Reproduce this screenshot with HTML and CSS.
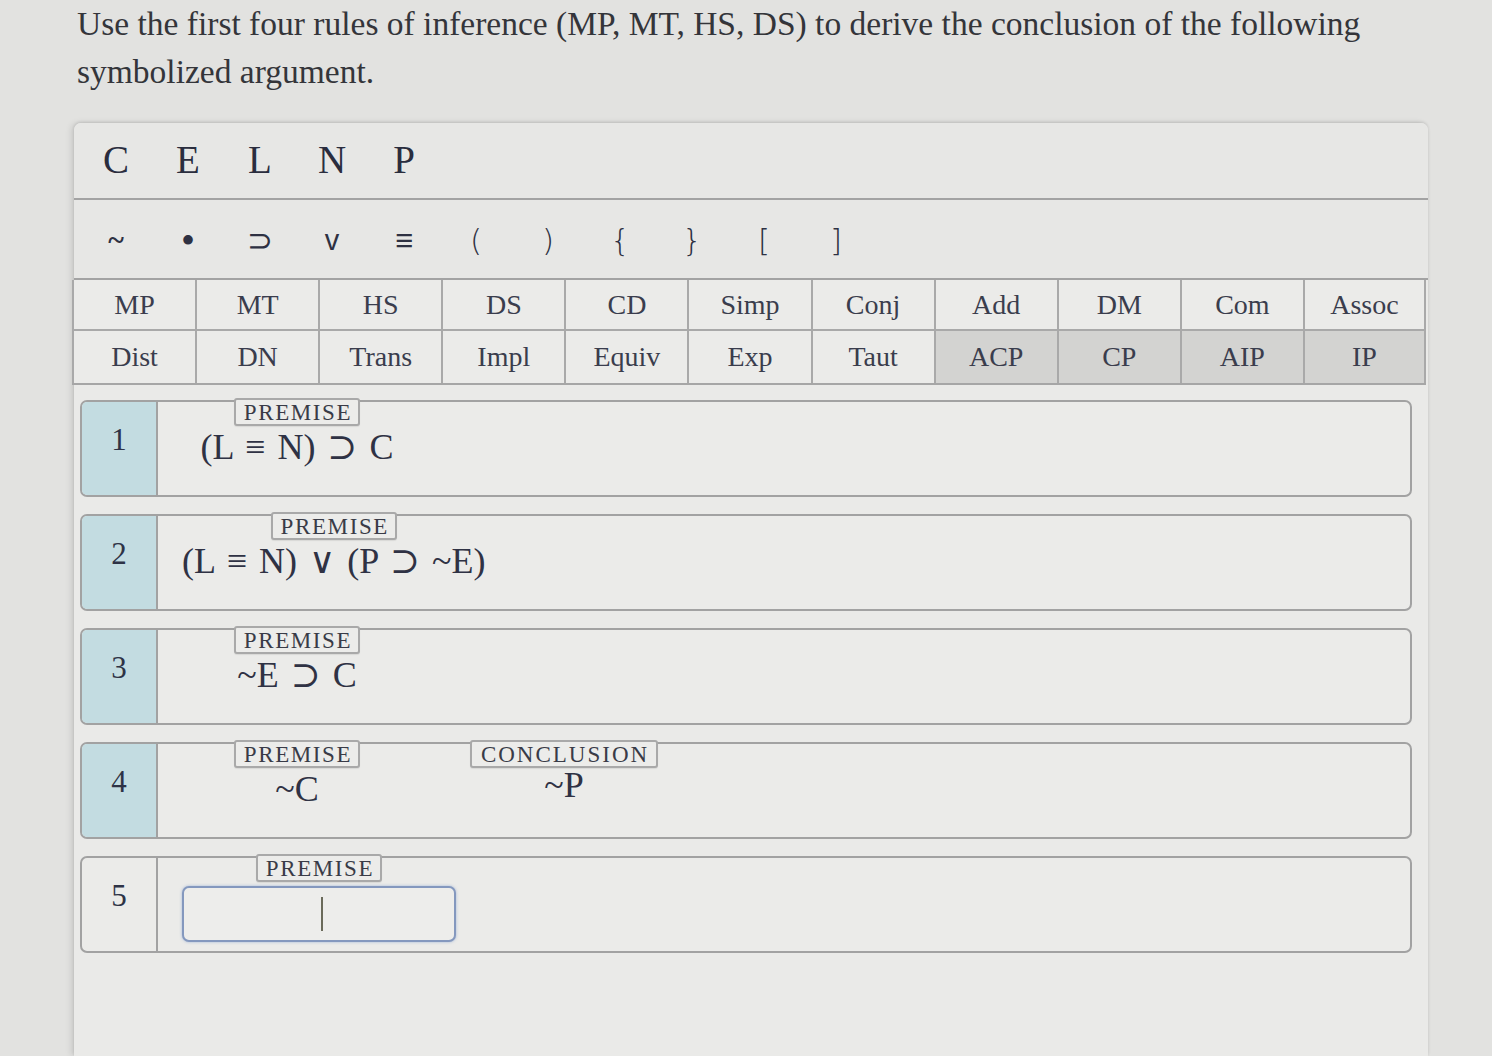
FILE: index.html
```html
<!DOCTYPE html>
<html>
<head>
<meta charset="utf-8">
<link rel="stylesheet" href="styles.css">
</head>
<body>
<p class="prompt">Use the first four rules of inference (MP, MT, HS, DS) to derive the conclusion of the following symbolized argument.</p>
<div class="panel">
  <div class="letters">
    <span class="key">C</span><span class="key">E</span><span class="key">L</span><span class="key">N</span><span class="key">P</span>
  </div>
  <div class="symbols">
    <span class="key sym tilde">~</span><span class="key sym dot">•</span><span class="key sym">⊃</span><span class="key sym vee">v</span><span class="key sym">≡</span><span class="key sym">(</span><span class="key sym">)</span><span class="key sym">{</span><span class="key sym">}</span><span class="key sym">[</span><span class="key sym">]</span>
  </div>
  <div class="rules">
    <div class="rule">MP</div><div class="rule">MT</div><div class="rule">HS</div><div class="rule">DS</div><div class="rule">CD</div><div class="rule">Simp</div><div class="rule">Conj</div><div class="rule">Add</div><div class="rule">DM</div><div class="rule">Com</div><div class="rule">Assoc</div>
    <div class="rule">Dist</div><div class="rule">DN</div><div class="rule">Trans</div><div class="rule">Impl</div><div class="rule">Equiv</div><div class="rule">Exp</div><div class="rule">Taut</div><div class="rule dim">ACP</div><div class="rule dim">CP</div><div class="rule dim">AIP</div><div class="rule dim">IP</div>
  </div>
  <div class="lines">
    <div class="line">
      <div class="num given">1</div>
      <div class="cell">
        <span class="tag">PREMISE</span>
        <span class="formula">(L ≡ N) ⊃ C</span>
      </div>
    </div>
    <div class="line">
      <div class="num given">2</div>
      <div class="cell">
        <span class="tag">PREMISE</span>
        <span class="formula">(L ≡ N) ∨ (P ⊃ ~E)</span>
      </div>
    </div>
    <div class="line">
      <div class="num given">3</div>
      <div class="cell">
        <span class="tag">PREMISE</span>
        <span class="formula">~E ⊃ C</span>
      </div>
    </div>
    <div class="line">
      <div class="num given">4</div>
      <div class="cell">
        <span class="tag">PREMISE</span>
        <span class="formula">~C</span>
      </div>
      <div class="cell conclusion">
        <span class="tag">CONCLUSION</span>
        <span class="formula small">~P</span>
      </div>
    </div>
    <div class="line">
      <div class="num">5</div>
      <div class="cell">
        <span class="tag">PREMISE</span>
        <div class="input"><span class="caret"></span></div>
      </div>
    </div>
  </div>
</div>
</body>
</html>
```
FILE: styles.css
```css
html, body {
  margin: 0;
  padding: 0;
}
body {
  background: #e2e2e0;
  font-family: "Liberation Serif", "DejaVu Serif", serif;
  color: #2e3142;
  height: 1056px;
  overflow: hidden;
}
.prompt {
  margin: 0;
  padding: 0 100px 0 77px;
  font-size: 33.5px;
  line-height: 48px;
  color: #34353a;
  height: 123px;
  box-sizing: border-box;
}
.panel {
  margin-left: 74px;
  width: 1354px;
  background: #eaeae8;
  border-radius: 7px 7px 0 0;
  box-shadow: -3px 0 6px rgba(0,0,0,0.10), 0 -1px 3px rgba(0,0,0,0.12);
  min-height: 933px;
}
.letters, .symbols {
  display: flex;
  align-items: center;
  padding-left: 6px;
  background: #e7e7e5;
  border-bottom: 2px solid #a3a3a3;
  box-sizing: border-box;
}
.letters {
  height: 77px;
  border-radius: 7px 7px 0 0;
}
.symbols {
  height: 80px;
}
.key {
  width: 72px;
  text-align: center;
  font-size: 39px;
  color: #2a2d3e;
}
.letters .key {
  padding-bottom: 2px;
}
.sym {
  font-family: "DejaVu Sans", "Liberation Sans", sans-serif;
  font-size: 31px;
  font-weight: 300;
  color: #2e3142;
  padding-top: 2px;
}
.sym.tilde {
  font-family: "Liberation Serif", serif;
  font-weight: bold;
  font-size: 30px;
}
.sym.dot {
  font-family: "Liberation Serif", serif;
  font-size: 40px;
}
.sym.vee {
  font-family: "Liberation Sans", sans-serif;
  font-size: 29px;
}
.rules {
  display: grid;
  grid-template-columns: repeat(11, 1fr);
  border-bottom: 2px solid #a6a6a6;
  margin-left: -2px;
  margin-right: 2px;
}
.rule {
  height: 51px;
  display: flex;
  align-items: center;
  justify-content: center;
  font-size: 28px;
  color: #3a3d4d;
  background: #ebebe9;
  border-left: 2px solid #a9a9a9;
  border-bottom: 2px solid #a9a9a9;
  box-sizing: border-box;
}
.rule:nth-child(11), .rule:nth-child(22) {
  border-right: 2px solid #a9a9a9;
}
.rule:nth-child(n+12) {
  border-bottom: none;
  height: 52px;
}
.rule.dim {
  background: #d3d3d1;
}
.lines {
  padding: 15px 16px 0 6px;
  display: flex;
  flex-direction: column;
  gap: 17px;
}
.line {
  display: flex;
  height: 97px;
  border: 2px solid #a2a2a2;
  border-radius: 7px;
  background: #ebebe9;
  box-sizing: border-box;
}
.num {
  width: 76px;
  flex: none;
  display: flex;
  align-items: center;
  justify-content: center;
  padding-bottom: 18px;
  box-sizing: border-box;
  font-size: 31px;
  color: #2e3346;
  border-right: 2px solid #a2a2a2;
  border-radius: 5px 0 0 5px;
}
.num.given {
  background: #c3dce1;
}
.cell {
  display: flex;
  flex-direction: column;
  align-items: center;
  min-width: 230px;
  margin-left: 24px;
  margin-top: -4px;
}
.cell.conclusion {
  margin-left: 37px;
}
.tag {
  display: block;
  height: 24px;
  line-height: 25px;
  padding: 0 6px 0 8px;
  font-size: 23px;
  letter-spacing: 1.6px;
  color: #393b47;
  background: #ececea;
  border: 2px solid #a9a9a9;
  border-radius: 3px;
  box-shadow: 0 1px 1px rgba(0,0,0,0.08);
}
.conclusion .tag {
  padding: 0 7px 0 9px;
  letter-spacing: 2px;
}
.formula {
  margin-top: 0;
  font-size: 36px;
  line-height: 42px;
  color: #2f3244;
  white-space: pre;
  word-spacing: 3px;
}
.formula.small {
  margin-top: -4px;
}
.input {
  margin-top: 4px;
  width: 274px;
  height: 56px;
  box-sizing: border-box;
  border: 2px solid #8498be;
  border-radius: 7px;
  background: #ededeb;
  box-shadow: 0 0 3px rgba(90,130,200,0.5);
  display: flex;
  align-items: center;
  justify-content: center;
}
.caret {
  width: 2px;
  height: 34px;
  background: #6a6a5a;
  margin-left: 6px;
}
```
